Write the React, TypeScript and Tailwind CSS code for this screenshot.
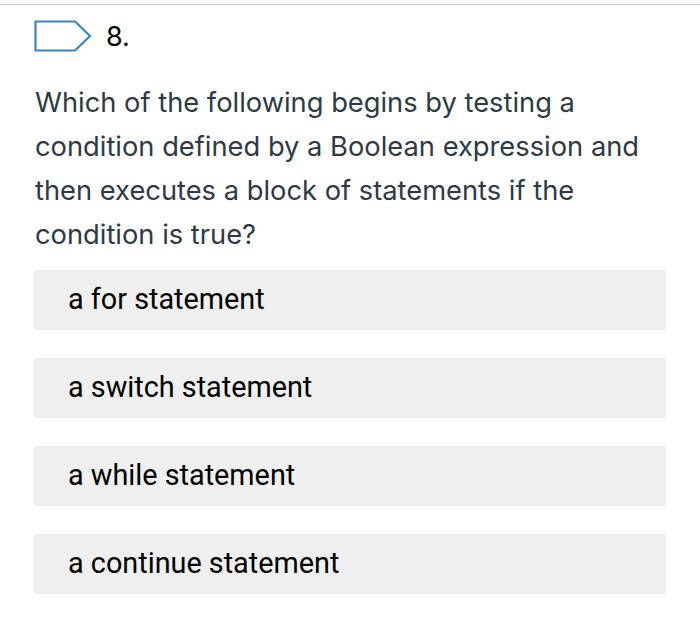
export default function App() {
  const options = ['a for statement', 'a switch statement', 'a while statement', 'a continue statement'];
  return (
    <div className="w-[700px] h-[641px] bg-white overflow-hidden" style={{ fontFamily: 'Inter, "Noto Sans", sans-serif' }}>
      <div className="h-[4px] bg-[#f8f8f9]" />
      <div className="h-px bg-[#cfcfcf]" />
      <div className="flex items-center gap-[14px] pl-[34px] pt-[15px]">
        <svg width="58" height="32" viewBox="0 0 58 32" className="block">
          <path d="M1.5 1.5 H41 L56 16 L41 30.5 H1.5 Z" fill="none" stroke="#3b82c9" strokeWidth="2.2" strokeLinejoin="miter" />
        </svg>
        <span className="text-[27px] text-black leading-none">8.</span>
      </div>
      <p className="mt-[29px] pl-[35px] w-[665px] text-[27.3px] leading-[44px] text-[#2d3a45]">
        Which of the following begins by testing a condition defined by a Boolean expression and then executes a block of statements if the condition is true?
      </p>
      <div className="mt-[13px] flex flex-col gap-[28px] pl-[34px] pr-[34px]">
        {options.map((o) => (
          <div key={o} className="h-[60px] bg-[#efefef] flex items-center pl-[34px] text-[28.8px] text-black" style={{ fontFamily: 'Roboto, sans-serif' }}>
            {o}
          </div>
        ))}
      </div>
    </div>
  );
}
